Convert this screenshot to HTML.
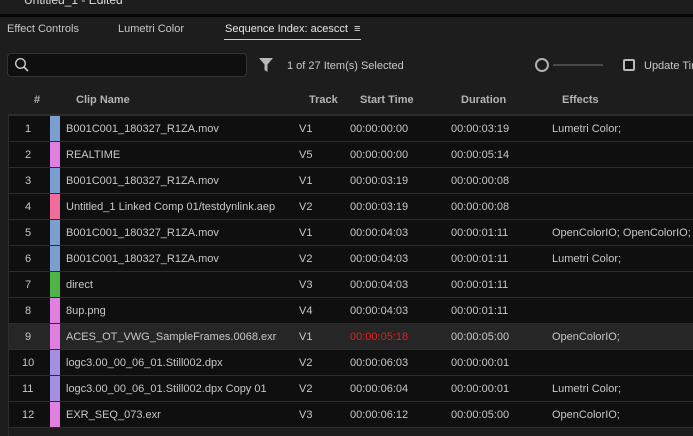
<!DOCTYPE html>
<html><head><style>
*{margin:0;padding:0;box-sizing:border-box}
body{width:693px;height:427px;overflow:hidden;background:#1d1d1d;font-family:"Liberation Sans",sans-serif;font-size:11px;color:#c8c8c8;position:relative}
.a{position:absolute;white-space:nowrap}
.row{position:absolute;left:9px;width:700px;height:26px;border-bottom:1px solid #2c2c2c;background:#0f0f0f}
.row span{position:absolute;top:7px;white-space:nowrap;color:#c8c8c8}
.sw{position:absolute;left:41px;top:0;width:10px;height:25px}
.h{position:absolute;top:94px;font-weight:bold;color:#b4b4b4;font-size:11px}
</style></head><body>
<div class="a" style="left:0;top:0;width:693px;height:15px;background:#1d1d1d"></div>
<div class="a" style="left:24px;top:-7px;color:#ddd;font-size:12px">Untitled_1 - Edited</div>
<div class="a" style="left:0;top:14px;width:693px;height:3px;background:#050505"></div>
<div class="a" style="left:7px;top:23px;color:#c8c8c8">Effect Controls</div>
<div class="a" style="left:118px;top:23px;color:#c8c8c8">Lumetri Color</div>
<div class="a" style="left:225px;top:23px;color:#e6e6e6">Sequence Index: acescct&nbsp;&nbsp;≡</div>
<div class="a" style="left:224px;top:39px;width:137px;height:1px;background:#d0d0d0"></div>
<div class="a" style="left:7px;top:53px;width:240px;height:24px;background:#0f0f0f;border:1px solid #333;border-radius:4px"></div>
<svg class="a" style="left:14px;top:57px" width="16" height="16" viewBox="0 0 16 16"><circle cx="6.5" cy="6.5" r="4.8" fill="none" stroke="#c8c8c8" stroke-width="1.4"/><line x1="10" y1="10" x2="14" y2="14" stroke="#c8c8c8" stroke-width="1.6"/></svg>
<svg class="a" style="left:259px;top:58px" width="14" height="15" viewBox="0 0 14 15"><path d="M0 0H14L8.5 6.5V14L5.5 12V6.5Z" fill="#b8b8b8"/></svg>
<div class="a" style="left:287px;top:60px;color:#c8c8c8">1 of 27 Item(s) Selected</div>
<div class="a" style="left:535px;top:58px;width:14px;height:14px;border:2px solid #b0b0b0;border-radius:50%"></div>
<div class="a" style="left:553px;top:64px;width:50px;height:2px;background:#4a4a4a"></div>
<div class="a" style="left:623px;top:59px;width:12px;height:12px;border:2px solid #b8b8b8;border-radius:2px;background:#111"></div>
<div class="a" style="left:644px;top:60px;color:#c8c8c8">Update Time</div>
<div class="h" style="left:34px">#</div>
<div class="h" style="left:76px">Clip Name</div>
<div class="h" style="left:309px">Track</div>
<div class="h" style="left:360px">Start Time</div>
<div class="h" style="left:461px">Duration</div>
<div class="h" style="left:562px">Effects</div>
<div class="a" style="left:8px;top:114px;width:690px;height:2px;background:#2c2c2c"></div>
<div class="a" style="left:8px;top:116px;width:1px;height:320px;background:#2c2c2c"></div>

<div class="row" style="top:116px"><div class="sw" style="background:#7b9fd0"></div><span style="left:16px">1</span><span style="left:57px">B001C001_180327_R1ZA.mov</span><span style="left:290px">V1</span><span style="left:341px">00:00:00:00</span><span style="left:442px">00:00:03:19</span><span style="left:543px">Lumetri Color;</span></div>
<div class="row" style="top:142px"><div class="sw" style="background:#e07fdf"></div><span style="left:16px">2</span><span style="left:57px">REALTIME</span><span style="left:290px">V5</span><span style="left:341px">00:00:00:00</span><span style="left:442px">00:00:05:14</span></div>
<div class="row" style="top:168px"><div class="sw" style="background:#7b9fd0"></div><span style="left:16px">3</span><span style="left:57px">B001C001_180327_R1ZA.mov</span><span style="left:290px">V1</span><span style="left:341px">00:00:03:19</span><span style="left:442px">00:00:00:08</span></div>
<div class="row" style="top:194px"><div class="sw" style="background:#f06d9e"></div><span style="left:16px">4</span><span style="left:57px">Untitled_1 Linked Comp 01/testdynlink.aep</span><span style="left:290px">V2</span><span style="left:341px">00:00:03:19</span><span style="left:442px">00:00:00:08</span></div>
<div class="row" style="top:220px"><div class="sw" style="background:#7b9fd0"></div><span style="left:16px">5</span><span style="left:57px">B001C001_180327_R1ZA.mov</span><span style="left:290px">V1</span><span style="left:341px">00:00:04:03</span><span style="left:442px">00:00:01:11</span><span style="left:543px">OpenColorIO; OpenColorIO;</span></div>
<div class="row" style="top:246px"><div class="sw" style="background:#7b9fd0"></div><span style="left:16px">6</span><span style="left:57px">B001C001_180327_R1ZA.mov</span><span style="left:290px">V2</span><span style="left:341px">00:00:04:03</span><span style="left:442px">00:00:01:11</span><span style="left:543px">Lumetri Color;</span></div>
<div class="row" style="top:272px"><div class="sw" style="background:#4fb548"></div><span style="left:16px">7</span><span style="left:57px">direct</span><span style="left:290px">V3</span><span style="left:341px">00:00:04:03</span><span style="left:442px">00:00:01:11</span></div>
<div class="row" style="top:298px"><div class="sw" style="background:#e07fdf"></div><span style="left:16px">8</span><span style="left:57px">8up.png</span><span style="left:290px">V4</span><span style="left:341px">00:00:04:03</span><span style="left:442px">00:00:01:11</span></div>
<div class="row" style="top:324px;background:#262626"><div class="sw" style="background:#e07fdf"></div><span style="left:16px">9</span><span style="left:57px">ACES_OT_VWG_SampleFrames.0068.exr</span><span style="left:290px">V1</span><span style="left:341px;color:#f01818">00:00:05:18</span><span style="left:442px">00:00:05:00</span><span style="left:543px">OpenColorIO;</span></div>
<div class="row" style="top:350px"><div class="sw" style="background:#a390e0"></div><span style="left:13px">10</span><span style="left:57px">logc3.00_00_06_01.Still002.dpx</span><span style="left:290px">V2</span><span style="left:341px">00:00:06:03</span><span style="left:442px">00:00:00:01</span></div>
<div class="row" style="top:376px"><div class="sw" style="background:#a390e0"></div><span style="left:13px">11</span><span style="left:57px">logc3.00_00_06_01.Still002.dpx Copy 01</span><span style="left:290px">V2</span><span style="left:341px">00:00:06:04</span><span style="left:442px">00:00:00:01</span><span style="left:543px">Lumetri Color;</span></div>
<div class="row" style="top:402px"><div class="sw" style="background:#e07fdf"></div><span style="left:13px">12</span><span style="left:57px">EXR_SEQ_073.exr</span><span style="left:290px">V3</span><span style="left:341px">00:00:06:12</span><span style="left:442px">00:00:05:00</span><span style="left:543px">OpenColorIO;</span></div>
</body></html>
